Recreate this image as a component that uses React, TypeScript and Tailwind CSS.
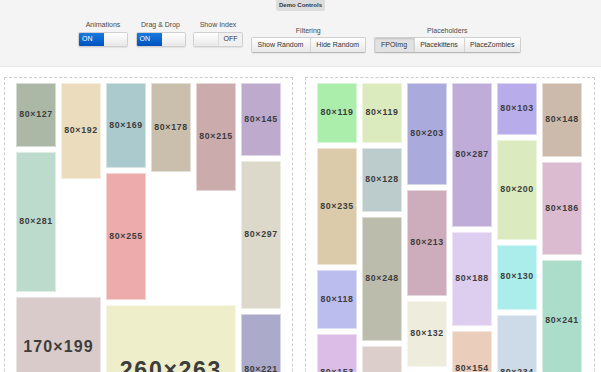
import React from "react";

type TileProps = { w: number; h: number; color: string };

// placeholder tile, drawn at half the size of the image it stands for
function Tile({ w, h, color }: TileProps) {
    const dw = w / 2;
    const fontSize = Math.round((dw * 0.16 + 2.4) * 10) / 10;
    return (
        <div
            className="flex shrink-0 items-center justify-center border border-white/50 font-bold tracking-[0.07em] text-[#3d3d3d]"
            style={{ width: dw, height: h / 2, backgroundColor: color, fontSize }}
        >
            {w}×{h}
        </div>
    );
}

function Col({ children }: { children: React.ReactNode }) {
    return <div className="flex w-[40px] flex-col gap-[5px]">{children}</div>;
}

function Switch({ on, label }: { on: boolean; label: string }) {
    return (
        <div className="flex flex-col items-center pt-[9px]">
            <span className="mb-[3px] h-[9px] text-[7px] leading-[9px] text-[#4a4a4a]">{label}</span>
            <div className="flex h-[15px] w-[50px] overflow-hidden rounded-[2px] border border-[#d0d0d0] shadow-[0_1px_1px_rgba(0,0,0,0.08)]">
                {on ? (
                    <>
                        <div className="flex w-[25px] items-center pl-[3px] bg-gradient-to-b from-[#1a7ae0] to-[#0052bd] text-[7px] text-white">ON</div>
                        <div className="flex-1 bg-gradient-to-b from-white to-[#e8e8e8]" />
                    </>
                ) : (
                    <>
                        <div className="w-[25px] bg-gradient-to-b from-white to-[#e8e8e8] border-r border-[#dcdcdc]" />
                        <div className="flex flex-1 items-center justify-center bg-[#f0f0f0] text-[7px] text-[#333]">OFF</div>
                    </>
                )}
            </div>
        </div>
    );
}

function BtnGroup({ label, items, active }: { label: string; items: { text: string; w: number }[]; active?: number }) {
    return (
        <div className="flex flex-col items-center pt-[14.5px]">
            <span className="mb-[2.5px] h-[9px] text-[7px] leading-[9px] text-[#4a4a4a]">{label}</span>
            <div className="flex h-[15.5px] overflow-hidden rounded-[2px] border border-[#cfcfcf] border-b-[#b8b8b8] shadow-[0_1px_1px_rgba(0,0,0,0.06)]">
                {items.map((it, i) => (
                    <div
                        key={it.text}
                        className={`flex items-center justify-center text-[7px] text-[#333] ${i > 0 ? "border-l border-[#d4d4d4]" : ""} ${
                            i === active
                                ? "bg-[#e2e2e2] shadow-[inset_0_1px_2px_rgba(0,0,0,0.15)]"
                                : "bg-gradient-to-b from-white to-[#e8e8e8]"
                        }`}
                        style={{ width: it.w }}
                    >
                        {it.text}
                    </div>
                ))}
            </div>
        </div>
    );
}

export default function App() {
    return (
        <div className="h-[372px] w-[601px] overflow-hidden bg-white font-['Liberation_Sans',Arial,sans-serif]">
            {/* Controls */}
            <div className="flex h-[67px] flex-col items-center border-b border-[#e9e9e9] bg-[#f4f4f4]">
                <div className="flex h-[11px] w-[49px] items-center justify-center rounded-b-[2px] bg-[#dddddd] text-[6px] font-bold text-[#333]">
                    Demo Controls
                </div>
                <div className="flex w-full items-start gap-[7.5px] pl-[78px]">
                    <Switch on label="Animations" />
                    <Switch on label="Drag & Drop" />
                    <Switch on={false} label="Show Index" />
                    <BtnGroup
                        label="Filtering"
                        items={[
                            { text: "Show Random", w: 58 },
                            { text: "Hide Random", w: 55.5 },
                        ]}
                    />
                    <BtnGroup
                        label="Placeholders"
                        active={0}
                        items={[
                            { text: "FPOImg", w: 39 },
                            { text: "Placekittens", w: 50 },
                            { text: "PlaceZombies", w: 56.5 },
                        ]}
                    />
                </div>
            </div>

            {/* Panels */}
            <div className="mt-[10px] flex gap-[12px] pl-[4px]">
                <div className="h-[400px] w-[289px] border border-dashed border-[#cccccc] px-[11px] pt-[5px]">
                    <div className="flex items-start gap-[5px]">
                        <div className="flex flex-col gap-[5px]">
                            <div className="flex items-start gap-[5px]">
                                <Col>
                                    <Tile w={80} h={127} color="#abb8a6" />
                                    <Tile w={80} h={281} color="#bddbcc" />
                                </Col>
                                <Col>
                                    <Tile w={80} h={192} color="#ebdcbe" />
                                </Col>
                            </div>
                            <Tile w={170} h={199} color="#dacbcb" />
                        </div>
                        <div className="flex flex-col gap-[5px]">
                            <div className="flex items-start gap-[5px]">
                                <Col>
                                    <Tile w={80} h={169} color="#abcacd" />
                                    <Tile w={80} h={255} color="#eeabab" />
                                </Col>
                                <Col>
                                    <Tile w={80} h={178} color="#c9bfac" />
                                </Col>
                                <Col>
                                    <Tile w={80} h={215} color="#cbabab" />
                                </Col>
                            </div>
                            <Tile w={260} h={263} color="#eeeecb" />
                        </div>
                        <Col>
                            <Tile w={80} h={145} color="#bdaacd" />
                            <Tile w={80} h={297} color="#dcd9cb" />
                            <Tile w={80} h={221} color="#abaacb" />
                        </Col>
                    </div>
                </div>

                <div className="h-[400px] w-[290px] border border-dashed border-[#cccccc] px-[11px] pt-[5px]">
                    <div className="flex items-start gap-[5px]">
                        <Col>
                            <Tile w={80} h={119} color="#abeeab" />
                            <Tile w={80} h={235} color="#dccbab" />
                            <Tile w={80} h={118} color="#bbbdee" />
                            <Tile w={80} h={153} color="#dbbde8" />
                        </Col>
                        <Col>
                            <Tile w={80} h={119} color="#dcebbe" />
                            <Tile w={80} h={128} color="#bccbcb" />
                            <Tile w={80} h={248} color="#bcbcad" />
                            <Tile w={80} h={196} color="#dccfcb" />
                        </Col>
                        <Col>
                            <Tile w={80} h={203} color="#abaadd" />
                            <Tile w={80} h={213} color="#cdacbb" />
                            <Tile w={80} h={132} color="#edecdd" />
                            <Tile w={80} h={160} color="#cbdcab" />
                        </Col>
                        <Col>
                            <Tile w={80} h={287} color="#bfacd9" />
                            <Tile w={80} h={188} color="#ddcdee" />
                            <Tile w={80} h={154} color="#ebcdbc" />
                        </Col>
                        <Col>
                            <Tile w={80} h={103} color="#b9acea" />
                            <Tile w={80} h={200} color="#dcebbf" />
                            <Tile w={80} h={130} color="#abedea" />
                            <Tile w={80} h={234} color="#cddbe8" />
                        </Col>
                        <Col>
                            <Tile w={80} h={148} color="#ccbbab" />
                            <Tile w={80} h={186} color="#dbbbcf" />
                            <Tile w={80} h={241} color="#acddcb" />
                        </Col>
                    </div>
                </div>
            </div>
        </div>
    );
}
